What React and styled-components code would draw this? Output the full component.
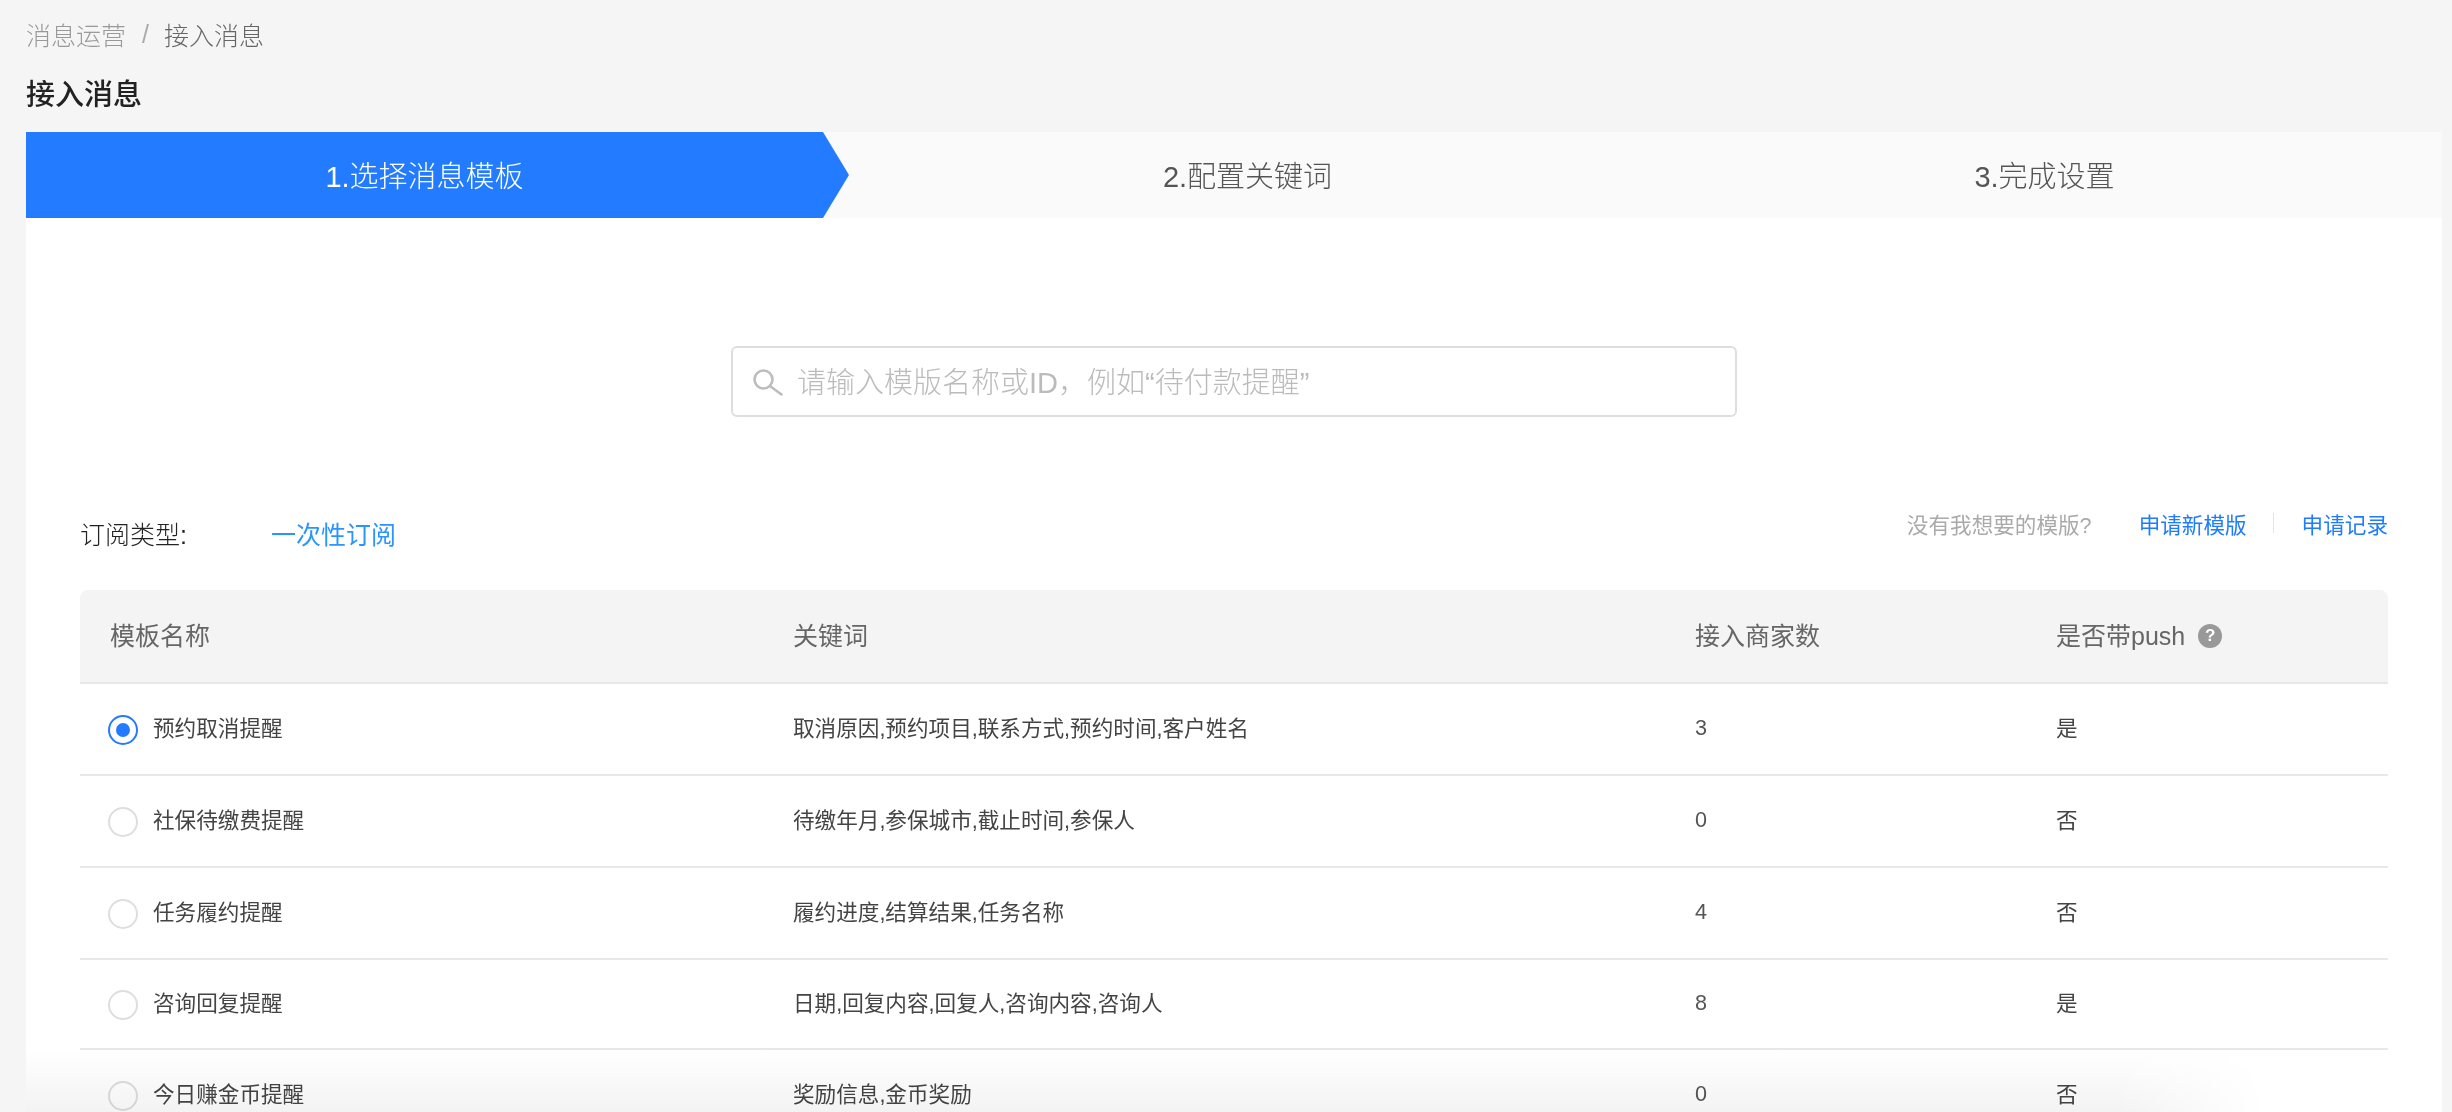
import { createGlobalStyle } from "styled-components";
import styled from "styled-components";

const GlobalStyle = createGlobalStyle`
	html, body {
		margin: 0;
		padding: 0;
		height: 100%;
		background: #f5f5f5;
		overflow: hidden;
	}
	* {
		box-sizing: border-box;
	}
`;

const rows = [
	{ name: "预约取消提醒", keywords: "取消原因,预约项目,联系方式,预约时间,客户姓名", count: 3, push: "是", checked: true, height: 92 },
	{ name: "社保待缴费提醒", keywords: "待缴年月,参保城市,截止时间,参保人", count: 0, push: "否", height: 92 },
	{ name: "任务履约提醒", keywords: "履约进度,结算结果,任务名称", count: 4, push: "否", height: 92 },
	{ name: "咨询回复提醒", keywords: "日期,回复内容,回复人,咨询内容,咨询人", count: 8, push: "是", height: 90 },
	{ name: "今日赚金币提醒", keywords: "奖励信息,金币奖励", count: 0, push: "否", height: 92 },
];

export default function App() {
	return (
		<Page>
			<GlobalStyle />
			<Breadcrumb>
				<CrumbLink>消息运营</CrumbLink>
				<CrumbSlash>/</CrumbSlash>
				<CrumbCurrent>接入消息</CrumbCurrent>
			</Breadcrumb>
			<Title>接入消息</Title>
			<Panel>
				<Steps>
					<Step $active>1.选择消息模板</Step>
					<StepArrow />
					<Step>2.配置关键词</Step>
					<Step>3.完成设置</Step>
				</Steps>
				<SearchRow>
					<SearchBox>
						<svg width="30" height="27" viewBox="0 0 30 27" fill="none" stroke="#bdbdbd" strokeWidth="2.6" strokeLinecap="round">
							<circle cx="10.5" cy="10.5" r="9" />
							<path d="M17 17L28.5 25.5" />
						</svg>
						<SearchInput placeholder="请输入模版名称或ID，例如“待付款提醒”" />
					</SearchBox>
				</SearchRow>
				<Body>
					<FilterRow>
						<FilterGroup>
							<FilterLabel>订阅类型:</FilterLabel>
							<FilterValue>一次性订阅</FilterValue>
						</FilterGroup>
						<Links>
							<Hint>没有我想要的模版?</Hint>
							<LinkText>申请新模版</LinkText>
							<LinkDivider />
							<LinkText>申请记录</LinkText>
						</Links>
					</FilterRow>
					<TableHead>
						<NameCell $indent={30}>模板名称</NameCell>
						<div>关键词</div>
						<div>接入商家数</div>
						<PushCell>
							是否带push
							<HelpIcon>?</HelpIcon>
						</PushCell>
					</TableHead>
					{rows.map((row) => (
						<Row key={row.name} $height={row.height}>
							<NameCell $indent={28}>
								<Radio $checked={row.checked} />
								{row.name}
							</NameCell>
							<div>{row.keywords}</div>
							<CountCell>{row.count}</CountCell>
							<PushCell>{row.push}</PushCell>
						</Row>
					))}
				</Body>
				<BottomFade />
			</Panel>
		</Page>
	);
}

const fontStack = `"Liberation Sans", "Noto Sans CJK SC", sans-serif`;

const Page = styled.div`
	height: 1112px;
	padding: 0 10px 0 26px;
	overflow: hidden;
	font-family: ${fontStack};
	background: #f5f5f5;
`;

const Breadcrumb = styled.div`
	display: flex;
	align-items: center;
	height: 68px;
	font-size: 25px;
	font-weight: 300;
`;

const CrumbLink = styled.span`
	color: #999;
`;

const CrumbSlash = styled.span`
	margin: 0 15px 0 16px;
	color: #aaa;
`;

const CrumbCurrent = styled.span`
	color: #666;
`;

const Title = styled.div`
	height: 64px;
	padding-top: 7px;
	line-height: 40px;
	font-size: 29px;
	font-weight: 500;
	color: #222;
`;

const Panel = styled.div`
	position: relative;
	background: #fff;
	height: 980px;
`;

const Steps = styled.div`
	display: flex;
	height: 86px;
	background: #fafafa;
`;

const Step = styled.div`
	flex: 0 0 797px;
	display: flex;
	align-items: center;
	justify-content: center;
	padding-bottom: 2px;
	font-size: 29px;
	font-weight: 300;
	color: ${(p) => (p.$active ? "#fff" : "#555")};
	background: ${(p) => (p.$active ? "#237bff" : "transparent")};
`;

const StepArrow = styled.div`
	flex: 0 0 26px;
	background: #237bff;
	clip-path: polygon(0 0, 100% 50%, 0 100%);
`;

const SearchRow = styled.div`
	display: flex;
	padding: 128px 0 0 705px;
`;

const SearchBox = styled.div`
	display: flex;
	align-items: center;
	gap: 14px;
	width: 1006px;
	height: 71px;
	padding: 2px 20px 0;
	border: 2px solid #dedede;
	border-radius: 6px;
`;

const SearchInput = styled.input`
	flex: 1;
	border: 0;
	outline: 0;
	padding: 2px 0 0;
	font-family: ${fontStack};
	font-size: 29px;
	font-weight: 300;
	&::placeholder {
		color: #bbb;
		opacity: 1;
	}
`;

const Body = styled.div`
	padding: 0 54px;
`;

const FilterRow = styled.div`
	display: flex;
	justify-content: space-between;
	align-items: flex-start;
	height: 173px;
	padding-top: 87px;
`;

const FilterGroup = styled.div`
	display: flex;
	align-items: center;
	height: 44px;
	padding-top: 14px;
`;

const FilterLabel = styled.span`
	width: 191px;
	font-size: 25px;
	font-weight: 300;
	color: #222;
`;

const FilterValue = styled.span`
	font-size: 25px;
	font-weight: 400;
	color: #2b95ff;
`;

const Links = styled.div`
	display: flex;
	align-items: center;
	height: 38px;
	font-size: 21.6px;
	font-weight: 400;
`;

const Hint = styled.span`
	margin-right: 47px;
	color: #aaa;
`;

const LinkText = styled.span`
	color: #1f7cff;
`;

const LinkDivider = styled.span`
	width: 1px;
	height: 20px;
	margin: 0 28px 0 26px;
	background: #e4e4e4;
`;

const TableRow = styled.div`
	display: grid;
	grid-template-columns: 713px 902px 361px 1fr;
	align-items: center;
	border-bottom: 2px solid #e8e8e8;
	padding-bottom: 5px;
`;

const TableHead = styled(TableRow)`
	height: 94px;
	padding-bottom: 4px;
	font-size: 25px;
	font-weight: 400;
	color: #666;
	background: #f4f4f4;
	border-radius: 8px 8px 0 0;
`;

const Row = styled(TableRow)`
	height: ${(p) => p.$height}px;
	font-size: 21.6px;
	font-weight: 400;
	color: #444;
`;

const NameCell = styled.div`
	display: flex;
	align-items: center;
	padding-left: ${(p) => p.$indent}px;
`;

const CountCell = styled.div`
	padding-top: 3px;
	color: #555;
`;

const PushCell = styled.div`
	display: flex;
	align-items: center;
`;

const HelpIcon = styled.span`
	display: flex;
	align-items: center;
	justify-content: center;
	width: 24px;
	height: 24px;
	margin: 3px 0 0 13px;
	border-radius: 50%;
	background: #999;
	color: #fff;
	font-size: 17px;
	font-weight: 700;
`;

const Radio = styled.span`
	position: relative;
	flex: none;
	width: 30px;
	height: 30px;
	margin: 7px 15px 0 0;
	border-radius: 50%;
	border: 2px solid ${(p) => (p.$checked ? "#237bff" : "#dedede")};
	&::after {
		content: "";
		display: ${(p) => (p.$checked ? "block" : "none")};
		position: absolute;
		inset: 6px;
		border-radius: 50%;
		background: #237bff;
	}
`;

const BottomFade = styled.div`
	position: absolute;
	left: 0;
	right: 0;
	bottom: 0;
	height: 62px;
	pointer-events: none;
	mix-blend-mode: multiply;
	background: linear-gradient(to bottom, #ffffff, #f3f3f3);
	mask-image: linear-gradient(to right, #000 2090px, transparent 2240px);
`;
